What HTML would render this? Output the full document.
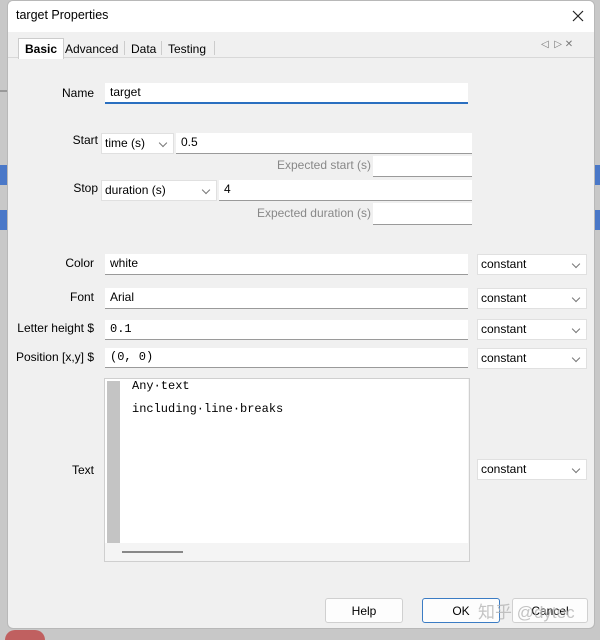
<!DOCTYPE html>
<html><head><style>
*{box-sizing:border-box;margin:0;padding:0}
body{width:600px;height:637px;overflow:hidden;background:#c8c8c8;font-family:"Liberation Sans",sans-serif;font-size:12px;color:#000;position:relative}
.a{position:absolute}
.dlg{left:7px;top:0;width:588px;height:629px;background:#f0f0f0;border:1px solid #b8b8b8;border-radius:6px;overflow:hidden}
.in{position:absolute;background:#fff;border-bottom:1px solid #9a9a9a;padding-left:5px;line-height:19px;font-size:12px}
.sel{position:absolute;background:#fff;border:1px solid #e0e0e0;padding-left:3px;line-height:19px;font-size:12px}
.sel:after{content:"";position:absolute;right:7px;top:6px;width:5px;height:5px;border-right:1px solid #777;border-bottom:1px solid #777;transform:rotate(45deg)}
.lb{position:absolute;text-align:right;font-size:12px}
.mono{font-family:"Liberation Mono",monospace;font-size:12px}
.btn{position:absolute;background:#fdfdfd;border:1px solid #d0d0d0;border-radius:3px;text-align:center;line-height:24px;font-size:12px}
</style></head><body>
<div class="a" style="left:0;top:90px;width:7px;height:2px;background:#999"></div>
<div class="a" style="left:0;top:165px;width:7px;height:20px;background:#4a78c8"></div>
<div class="a" style="left:0;top:210px;width:7px;height:20px;background:#4a78c8"></div>
<div class="a" style="left:595px;top:165px;width:5px;height:20px;background:#4a78c8"></div>
<div class="a" style="left:595px;top:210px;width:5px;height:20px;background:#4a78c8"></div>
<div class="a dlg">
 <div class="a" style="left:0;top:0;width:588px;height:31px;background:#fff"></div>
 <div class="a" style="left:8px;top:7px;font-size:12.5px">target Properties</div>
 <svg class="a" style="left:564px;top:9px" width="12" height="12"><path d="M1 1L11 11M11 1L1 11" stroke="#222" stroke-width="1.2"/></svg>
 <div class="a" style="left:0;top:56px;width:588px;height:1px;background:#d8d8d8"></div>
 <div class="a" style="left:10px;top:37px;width:46px;height:21px;background:#fff;border:1px solid #ccc;border-bottom:none"></div>
 <div class="a" style="left:17px;top:41px;font-weight:bold">Basic</div>
 <div class="a" style="left:57px;top:41px">Advanced</div>
 <div class="a" style="left:116px;top:40px;width:1px;height:14px;background:#ccc"></div>
 <div class="a" style="left:123px;top:41px">Data</div>
 <div class="a" style="left:153px;top:40px;width:1px;height:14px;background:#ccc"></div>
 <div class="a" style="left:160px;top:41px">Testing</div>
 <div class="a" style="left:206px;top:40px;width:1px;height:14px;background:#ccc"></div>
 <div class="a" style="left:533px;top:38px;font-size:10px;color:#777">◁ &nbsp;▷ ✕</div>
</div>
<div class="lb" style="left:40px;top:86px;width:54px">Name</div>
<div class="in" style="left:105px;top:83px;width:363px;height:21px;border-bottom:2px solid #2a6fc0">target</div>
<div class="lb" style="left:40px;top:133px;width:58px">Start</div>
<div class="sel" style="left:101px;top:133px;width:73px;height:21px">time (s)</div>
<div class="in" style="left:176px;top:133px;width:296px;height:21px">0.5</div>
<div class="lb" style="left:200px;top:158px;width:171px;color:#888">Expected start (s)</div>
<div class="in" style="left:373px;top:156px;width:99px;height:21px"></div>
<div class="lb" style="left:40px;top:181px;width:58px">Stop</div>
<div class="sel" style="left:101px;top:180px;width:116px;height:21px">duration (s)</div>
<div class="in" style="left:219px;top:180px;width:253px;height:21px">4</div>
<div class="lb" style="left:200px;top:206px;width:171px;color:#888">Expected duration (s)</div>
<div class="in" style="left:373px;top:203px;width:99px;height:22px"></div>

<div class="lb" style="left:10px;top:256px;width:84px">Color</div>
<div class="in" style="left:105px;top:254px;width:363px;height:21px">white</div>
<div class="sel" style="left:477px;top:254px;width:110px;height:21px">constant</div>
<div class="lb" style="left:10px;top:290px;width:84px">Font</div>
<div class="in" style="left:105px;top:288px;width:363px;height:21px">Arial</div>
<div class="sel" style="left:477px;top:288px;width:110px;height:21px">constant</div>
<div class="lb" style="left:5px;top:321px;width:89px">Letter height $</div>
<div class="in mono" style="left:105px;top:320px;width:363px;height:20px">0.1</div>
<div class="sel" style="left:477px;top:319px;width:110px;height:21px">constant</div>
<div class="lb" style="left:5px;top:350px;width:89px">Position [x,y] $</div>
<div class="in mono" style="left:105px;top:348px;width:363px;height:20px">(0, 0)</div>
<div class="sel" style="left:477px;top:348px;width:110px;height:21px">constant</div>

<div class="a" style="left:104px;top:378px;width:366px;height:184px;background:#f4f4f4;border:1px solid #cfcfcf"></div>
<div class="a" style="left:105px;top:379px;width:363px;height:164px;background:#fff"></div>
<div class="a" style="left:107px;top:381px;width:13px;height:162px;background:#c4c4c4"></div>
<div class="a mono" style="left:132px;top:379px;line-height:15px">Any·text</div>
<div class="a mono" style="left:132px;top:402px;line-height:15px">including·line·breaks</div>
<div class="a" style="left:122px;top:551px;width:61px;height:2px;background:#888"></div>
<div class="lb" style="left:40px;top:463px;width:54px">Text</div>
<div class="sel" style="left:477px;top:459px;width:110px;height:21px">constant</div>

<div class="btn" style="left:325px;top:598px;width:78px;height:25px">Help</div>
<div class="btn" style="left:422px;top:598px;width:78px;height:25px;border:1px solid #3b7cc4">OK</div>
<div class="btn" style="left:512px;top:598px;width:76px;height:25px">Cancel</div>
<div class="a" style="left:478px;top:598px;font-size:17px;color:rgba(180,180,180,.8);font-family:'Liberation Sans','Noto Sans CJK SC',sans-serif">知乎 @dytec</div>
<div class="a" style="left:5px;top:630px;width:40px;height:10px;background:#c06060;border-radius:10px 10px 0 0"></div>
</body></html>
